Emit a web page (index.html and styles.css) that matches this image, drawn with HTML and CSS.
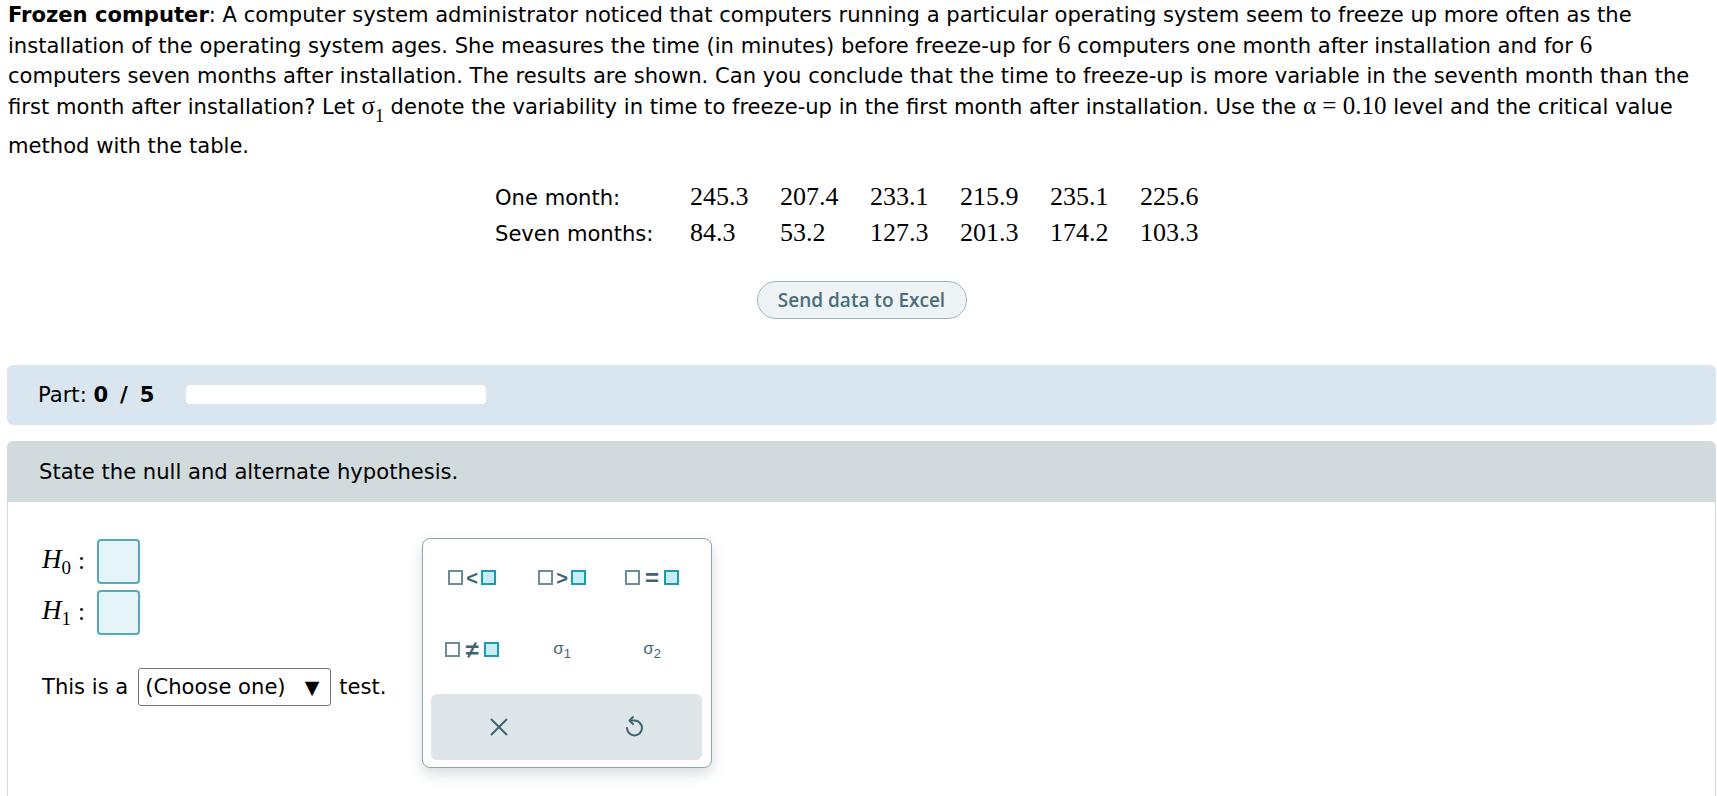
FILE: index.html
```html
<!DOCTYPE html>
<html>
<head>
<meta charset="utf-8">
<link rel="stylesheet" href="styles.css">
</head>
<body>
<div class="page">
  <p class="problem"><b>Frozen computer</b>: A computer system administrator noticed that computers running a particular operating system seem to freeze up more often as the<br>installation of the operating system ages. She measures the time (in minutes) before freeze-up for <span class="m">6</span> computers one month after installation and for <span class="m">6</span><br>computers seven months after installation. The results are shown. Can you conclude that the time to freeze-up is more variable in the seventh month than the<br>first month after installation? Let <span class="m">σ<sub>1</sub></span> denote the variability in time to freeze-up in the first month after installation. Use the <span class="m">α = 0.10</span> level and the critical value<br>method with the table.</p>

  <div class="data">
    <div class="lbl">One month:</div>
    <div class="n">245.3</div><div class="n">207.4</div><div class="n">233.1</div><div class="n">215.9</div><div class="n">235.1</div><div class="n">225.6</div>
    <div class="lbl">Seven months:</div>
    <div class="n">84.3</div><div class="n">53.2</div><div class="n">127.3</div><div class="n">201.3</div><div class="n">174.2</div><div class="n">103.3</div>
  </div>

  <div class="excel-row"><button class="excel">Send data to Excel</button></div>

  <div class="partbar">
    <span class="part-txt">Part:&nbsp;<b>0 / 5</b></span>
    <div class="track"></div>
  </div>

  <div class="panel">
    <div class="panel-head">State the null and alternate hypothesis.</div>
    <div class="panel-body">
      <div class="answers">
        <div class="hyp"><span class="hl"><i>H</i><sub>0</sub></span><span class="colon">:</span><span class="box"></span></div>
        <div class="hyp"><span class="hl"><i>H</i><sub>1</sub></span><span class="colon">:</span><span class="box"></span></div>
        <div class="test"><span class="pre">This is a</span><span class="sel">(Choose one)<span class="arr">▼</span></span><span class="after">test.</span></div>
      </div>
      <div class="palette">
        <div class="pal-grid">
          <div class="sym"><span class="sq"></span><span class="op">&lt;</span><span class="sq t"></span></div>
          <div class="sym"><span class="sq"></span><span class="op">&gt;</span><span class="sq t"></span></div>
          <div class="sym"><span class="sq"></span><span class="op eq">=</span><span class="sq t"></span></div>
          <div class="sym"><span class="sq"></span><span class="op eq">≠</span><span class="sq t"></span></div>
          <div class="sig">σ<sub>1</sub></div>
          <div class="sig">σ<sub>2</sub></div>
        </div>
        <div class="pal-foot">
          <div class="fbtn"><svg width="20" height="20" viewBox="0 0 20 20"><path d="M2 2 L18 18 M18 2 L2 18" stroke="#3e6470" stroke-width="2" fill="none"/></svg></div>
          <div class="fbtn"><svg width="20" height="23" viewBox="0 0 20 23"><path d="M9 2 L5.5 5.5 L9 9" stroke="#3e6470" stroke-width="2" fill="none" stroke-linecap="round" stroke-linejoin="round"/><path d="M6 5.5 H10.5 A7.5 7.5 0 1 1 3 13" stroke="#3e6470" stroke-width="2" fill="none" stroke-linecap="round"/></svg></div>
        </div>
      </div>
    </div>
  </div>
</div>
</body>
</html>
```

FILE: styles.css
```css
* { box-sizing: border-box; }
html, body { margin: 0; padding: 0; background: #fff; }
body {
  font-family: "DejaVu Sans", Verdana, sans-serif;
  font-size: 21.1px;
  color: #000;
}
.page { padding: 0 1px 0 7px; }

.problem {
  margin: 0;
  padding-left: 1px;
  line-height: 30.7px;
}
.m {
  font-family: "Liberation Serif", "Times New Roman", serif;
  font-size: 25px;
  line-height: 1;
}
.m sub {
  font-size: 18px;
  vertical-align: -8px;
  line-height: 30px;
}

.data {
  display: grid;
  grid-template-columns: 195px repeat(6, 90px);
  align-items: baseline;
  margin: 17px 0 0 488px;
  line-height: 35px;
}
.data .n {
  font-family: "Liberation Serif", "Times New Roman", serif;
  font-size: 26px;
}

.excel-row {
  display: flex;
  justify-content: center;
  margin-top: 30px;
}
.excel {
  width: 210px;
  height: 38px;
  border-radius: 19px;
  border: 1px solid #9db4bd;
  background: #eef3f5;
  color: #4a6e7b;
  font-family: "Open Sans", "Lato", sans-serif;
  font-weight: 600;
  font-size: 19px;
  padding: 0;
}

.partbar {
  margin-top: 46px;
  height: 60px;
  background: #dae6ef;
  border-radius: 6px;
  display: flex;
  align-items: center;
  padding-left: 31px;
}
.part-txt { white-space: nowrap; }
.partbar b { word-spacing: 3px; letter-spacing: 0.8px; }
.track {
  margin-left: 31px;
  width: 300px;
  height: 19px;
  background: #fff;
  border-radius: 4px;
}

.panel { margin-top: 16px; }
.panel-head {
  height: 61px;
  background: #d1dadd;
  border-radius: 6px 6px 0 0;
  display: flex;
  align-items: center;
  padding-left: 32px;
}
.panel-body {
  border-left: 1px solid #d3dcdf;
  border-right: 1px solid #d3dcdf;
  padding: 36px 0 120px 34px;
  display: flex;
  align-items: flex-start;
}
.answers { width: 342px; flex-shrink: 0; padding-top: 1px; }
.hyp {
  display: flex;
  align-items: center;
  height: 45px;
  margin-bottom: 6px;
}
.hl {
  width: 36px;
  font-family: "Liberation Serif", "Times New Roman", serif;
  font-size: 27px;
}
.hl sub {
  font-size: 19px;
  vertical-align: -6px;
  font-style: normal;
}
.colon {
  width: 19px;
  font-family: "Liberation Serif", "Times New Roman", serif;
  font-size: 25px;
}
.box {
  width: 43px;
  height: 45px;
  border: 2px solid #55a9b8;
  border-radius: 4px;
  background: #e5f4f7;
}
.test {
  margin-top: 33px;
  display: flex;
  align-items: center;
  white-space: nowrap;
}
.pre, .after, .sel { flex-shrink: 0; }
.sel {
  margin-left: 10px;
  width: 193px;
  height: 38px;
  border: 1px solid #767676;
  border-radius: 3px;
  padding-left: 6px;
  display: flex;
  align-items: center;
}
.arr {
  margin-left: auto;
  margin-right: 11px;
  font-size: 19px;
}
.after { margin-left: 8px; }

.palette {
  margin-left: 38px;
  width: 290px;
  height: 230px;
  flex-shrink: 0;
  border: 1px solid #8ea4ac;
  border-radius: 8px;
  background: #fff;
  box-shadow: 0 6px 14px rgba(60, 85, 95, 0.2);
  display: flex;
  flex-direction: column;
}
.pal-grid {
  margin: 3px 14px 0 4px;
  display: grid;
  grid-template-columns: repeat(3, 1fr);
  grid-auto-rows: 72px;
  align-items: center;
  justify-items: center;
}
.sym {
  display: flex;
  align-items: center;
  color: #3e6470;
  font-family: "Liberation Sans", Arial, sans-serif;
  font-size: 20px;
  font-weight: 700;
  line-height: 1;
}
.sq {
  width: 15px;
  height: 15px;
  border: 2px solid #6f8d96;
  background: #fff;
}
.sq.t {
  border-color: #1c9bb0;
  background: #c8ecf3;
}
.op {
  width: 18px;
  text-align: center;
}
.op.eq { width: 24px; font-size: 24px; }
.sig {
  color: #3e6470;
  font-family: "Liberation Sans", Arial, sans-serif;
  font-size: 17px;
}
.sig sub { font-size: 13px; vertical-align: -4px; }
.pal-foot {
  margin: 8px 9px 7px 8px;
  height: 66px;
  background: #dfe6e9;
  border-radius: 6px;
  display: grid;
  grid-template-columns: 1fr 1fr;
  align-items: center;
  justify-items: center;
}
.fbtn { display: flex; }
```
